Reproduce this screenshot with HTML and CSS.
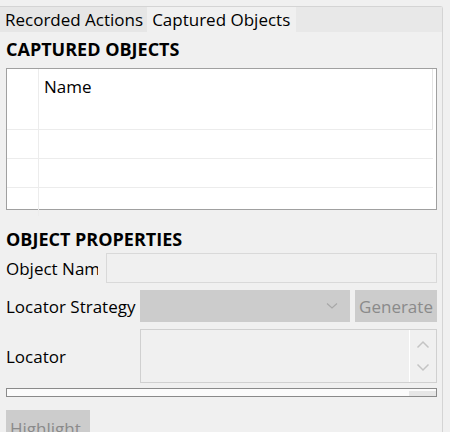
FILE: index.html
```html
<!DOCTYPE html>
<html lang="en">
<head>
  <meta charset="UTF-8">
  <title>Captured Objects</title>
  <link rel="stylesheet" href="styles.css">
</head>
<body>

<div class="panel">
  <div class="tabs">
    <div class="tab">Recorded Actions</div>
    <div class="tab active">Captured Objects</div>
  </div>

  <div class="content">
    <h2 class="section-title">CAPTURED OBJECTS</h2>
    <div class="objects-table">
      <div class="table-head">
        <div class="row-head"></div>
        <div class="col-head">Name</div>
      </div>
      <div class="table-row"><div class="row-head"></div><div class="cell"></div></div>
      <div class="table-row"><div class="row-head"></div><div class="cell"></div></div>
      <div class="table-row last"><div class="row-head"></div><div class="cell"></div></div>
    </div>

    <h2 class="section-title props">OBJECT PROPERTIES</h2>

    <div class="form-row">
      <label class="label short">Object Name</label>
      <div class="input"></div>
    </div>

    <div class="form-row">
      <label class="label">Locator Strategy</label>
      <div class="combo">
        <svg class="chevron" width="12" height="8" viewBox="0 0 12 8"><path d="M1 1.5 L6 6 L11 1.5" fill="none" stroke="#a8a8a8" stroke-width="1.2"/></svg>
      </div>
      <button class="btn">Generate</button>
    </div>

    <div class="form-row">
      <label class="label">Locator</label>
      <div class="textarea">
        <div class="scroll">
          <svg width="14" height="9" viewBox="0 0 14 9"><path d="M1.5 7.5 L7 2 L12.5 7.5" fill="none" stroke="#c4c4c4" stroke-width="1.5"/></svg>
          <svg width="14" height="9" viewBox="0 0 14 9"><path d="M1.5 1.5 L7 7 L12.5 1.5" fill="none" stroke="#c4c4c4" stroke-width="1.5"/></svg>
        </div>
      </div>
    </div>

    <div class="hbar"><div class="hbar-thumb"></div></div>

    <button class="btn highlight">Highlight</button>
  </div>
</div>

</body>
</html>
```

FILE: styles.css
```css
body {
  margin: 0;
  background-color: #f0f0f0;
  font-family: "Open Sans", "Noto Sans", sans-serif;
  font-size: 17px;
  color: #000;
  overflow: hidden;
  height: 432px;
}

/* Tab panel */
.panel {
  margin-top: 6px;
  width: 442px;
  height: 426px;
  border-top: 1px solid #d4d4d4;
  border-right: 1px solid #d4d4d4;
  border-top-right-radius: 3px;
}

.tabs {
  display: flex;
  height: 25px;
  background-color: #e8e8e8;
}

.tab {
  padding: 0 4px 0 5px;
  line-height: 25px;
  background-color: #e6e6e6;
}

.tab.active {
  padding-right: 6px;
  background-color: #f0f0f0;
}

.content {
  padding: 0 5px 0 6px;
}

.section-title {
  margin: 0;
  padding-top: 6px;
  height: 30px;
  font-size: 18px;
  font-weight: bold;
  line-height: 22px;
  box-sizing: border-box;
}

.section-title.props {
  padding-top: 18px;
  height: 43px;
}

/* Captured objects table */
.objects-table {
  margin-top: 6px;
  height: 142px;
  border: 1px solid #a0a0a0;
  background-color: #fff;
  box-sizing: border-box;
}

.table-head {
  display: flex;
  height: 60px;
  border-bottom: 1px solid #ececec;
  margin-right: 3px;
  border-right: 1px solid #e4e4e4;
}

.table-row {
  display: flex;
  height: 28px;
  border-bottom: 1px solid #ececec;
  margin-right: 3px;
}

.table-row.last {
  border-bottom: none;
}

.row-head {
  width: 31px;
  border-right: 1px solid #ececec;
}

.col-head {
  padding: 7px 0 0 5px;
  line-height: 22px;
}

/* Object properties form */
.form-row {
  display: flex;
  align-items: center;
  margin-bottom: 7px;
}

.label {
  width: 134px;
  flex-shrink: 0;
  white-space: nowrap;
  overflow: hidden;
}

.label.short {
  width: 92px;
  margin-right: 8px;
}

.input {
  flex: 1;
  height: 30px;
  border: 1px solid #d9d9d9;
  box-sizing: border-box;
}

.combo {
  width: 210px;
  height: 32px;
  background-color: #cccccc;
  display: flex;
  align-items: center;
  justify-content: flex-end;
  padding-right: 12px;
  box-sizing: border-box;
  margin-right: 5px;
}

.btn {
  font-family: inherit;
  font-size: 17px;
  color: #8a8a8a;
  background-color: #cccccc;
  border: none;
  height: 32px;
  width: 82px;
  padding: 0;
}

.textarea {
  flex: 1;
  height: 54px;
  border: 1px solid #d0d0d0;
  box-sizing: border-box;
  display: flex;
  justify-content: flex-end;
}

.scroll {
  width: 26px;
  border-left: 1px solid #ffffff;
  display: flex;
  flex-direction: column;
  align-items: center;
  justify-content: space-around;
  padding: 3px 0;
}

.hbar {
  margin-top: -2px;
  height: 7px;
  border: 1px solid #8a8a8a;
  background-color: #fbfbfb;
  display: flex;
  justify-content: flex-end;
}

.hbar-thumb {
  width: 27px;
  margin-top: 2px;
  background-color: #e6e6e6;
}

.highlight {
  margin-top: 13px;
  width: 84px;
  height: 34px;
  text-align: left;
  padding: 3px 0 0 4px;
  vertical-align: top;
}
```
